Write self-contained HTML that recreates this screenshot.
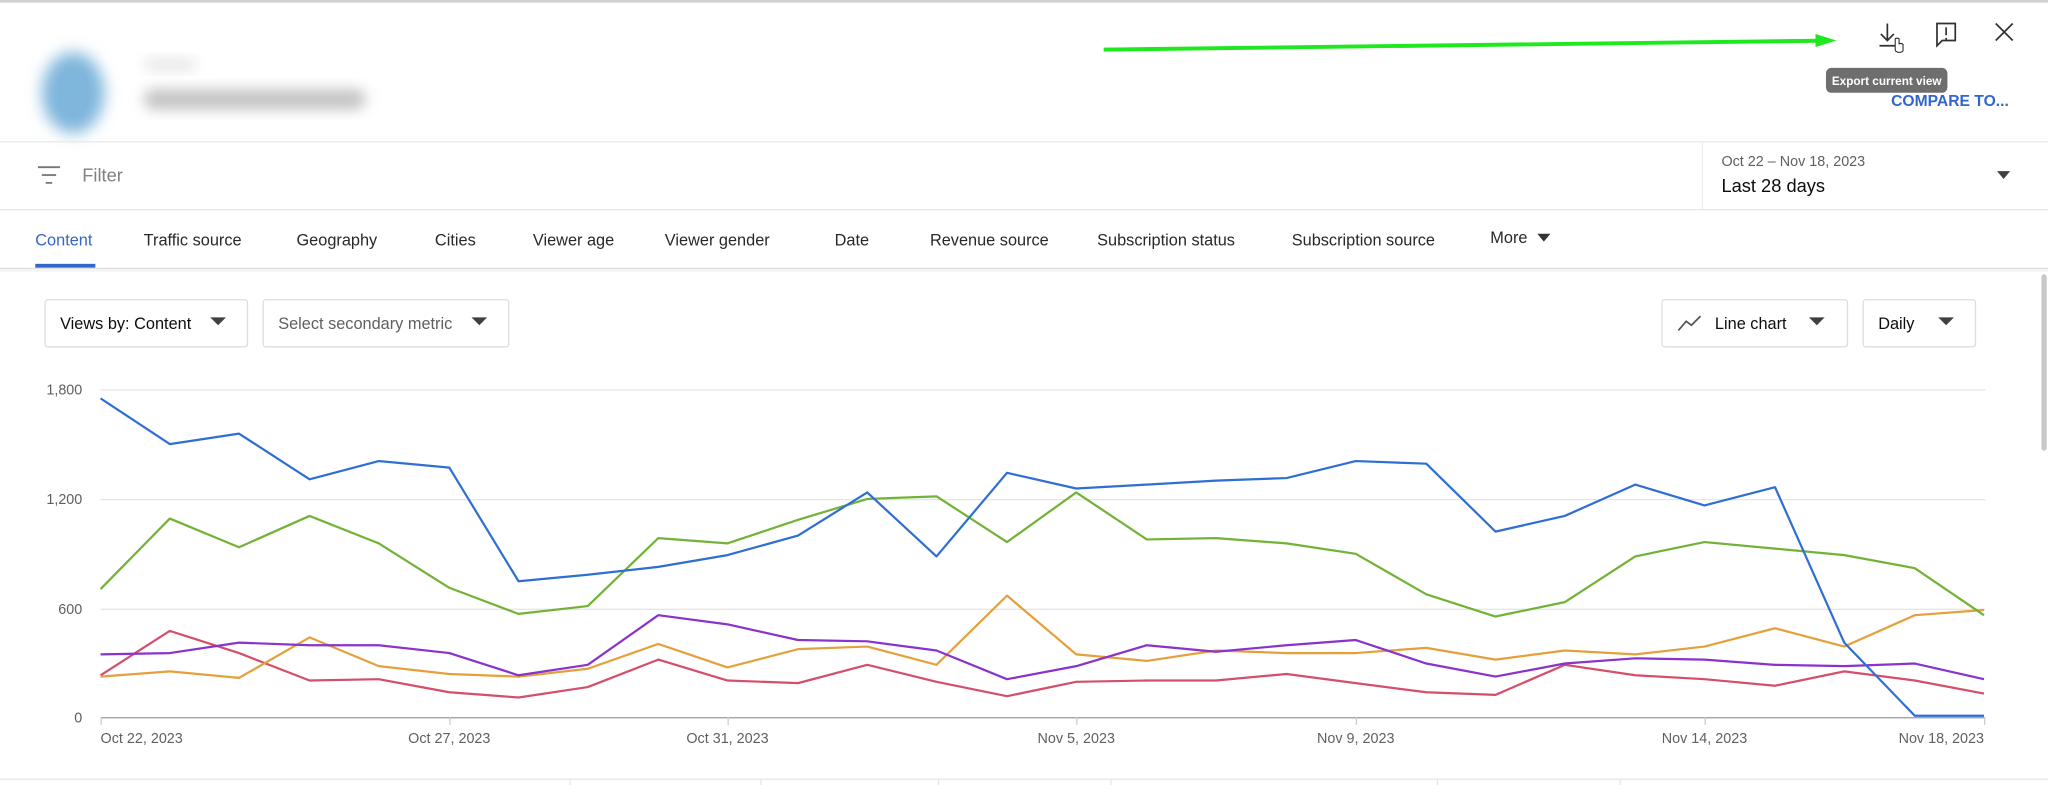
<!DOCTYPE html>
<html><head><meta charset="utf-8"><style>
html,body{margin:0;padding:0;background:#fff;overflow:hidden}
svg{display:block}
text{font-family:"Liberation Sans",sans-serif}
</style></head><body>
<svg width="2048" height="785" viewBox="0 0 1568 601" preserveAspectRatio="none" xmlns="http://www.w3.org/2000/svg">
<rect width="1568" height="601" fill="#fff"/>
<rect x="0" y="0" width="1568" height="2" fill="#d0d0d0"/>
<defs>
<filter id="b" x="-50%" y="-50%" width="200%" height="200%"><feGaussianBlur stdDeviation="6"/></filter>
<filter id="b2" x="-50%" y="-50%" width="200%" height="200%"><feGaussianBlur stdDeviation="5"/></filter>
</defs>
<ellipse cx="56" cy="71" rx="24" ry="31" fill="#7fb6dc" filter="url(#b)"/>
<rect x="110" y="68" width="170" height="16" rx="8" fill="#c4c4c4" filter="url(#b2)"/>
<rect x="110" y="45" width="40" height="9" rx="4" fill="#e6e6e6" filter="url(#b2)"/>
<line x1="0" y1="108.5" x2="1568" y2="108.5" stroke="#e8e8e8"/>
<line x1="845" y1="38" x2="1392" y2="31.2" stroke="#1ee81e" stroke-width="3"/>
<polygon points="1406,31 1390,26 1390,36" fill="#1ee81e"/>
<g stroke="#303030" stroke-width="1.3" fill="none">
<path d="M1445 18 V31 M1440 26 L1445 31 L1450 26 M1439 35 H1451"/>
<path d="M1483 18 H1497 V31 H1487 L1483 35 Z"/>
<path d="M1490 21 V27 M1490 29 V30.5"/>
<path d="M1528 18 L1541 31 M1541 18 L1528 31"/>
</g>
<path d="M1451 30 v8 c0 2 4 3 6 1 v-5 c-1-1 -3-1-3 0 v-4 c0-1 -3-1 -3 0z" fill="#fff" stroke="#222" stroke-width="0.8"/>
<rect x="1398" y="52" width="93" height="19" rx="4" fill="#6e6e6e"/>
<text x="1444.5" y="65" font-size="9" fill="#fff" text-anchor="middle" font-weight="bold">Export current view</text>
<text x="1538" y="81" font-size="12" fill="#3366cc" text-anchor="end" font-weight="bold">COMPARE TO...</text>
<g stroke="#777" stroke-width="1.4"><line x1="29" y1="128" x2="46" y2="128"/><line x1="32" y1="134" x2="43" y2="134"/><line x1="35" y1="140" x2="40" y2="140"/></g>
<text x="63" y="139" font-size="14" fill="#808080">Filter</text>
<line x1="1303.5" y1="109" x2="1303.5" y2="160" stroke="#eee"/>
<text x="1318" y="127" font-size="11" fill="#606060">Oct 22 – Nov 18, 2023</text>
<text x="1318" y="147" font-size="14" fill="#0d0d0d">Last 28 days</text>
<polygon points="1529,131 1539,131 1534,137" fill="#404040"/>
<line x1="0" y1="160.5" x2="1568" y2="160.5" stroke="#e6e6e6"/>
<g font-size="12.5" fill="#282828">
<text x="27" y="188" fill="#3366cc">Content</text>
<text x="110" y="188">Traffic source</text>
<text x="227" y="188">Geography</text>
<text x="333" y="188">Cities</text>
<text x="408" y="188">Viewer age</text>
<text x="509" y="188">Viewer gender</text>
<text x="639" y="188">Date</text>
<text x="712" y="188">Revenue source</text>
<text x="840" y="188">Subscription status</text>
<text x="989" y="188">Subscription source</text>
<text x="1141" y="186">More</text>
</g>
<polygon points="1177,179 1187,179 1182,185" fill="#333"/>
<rect x="27" y="202" width="46" height="3" fill="#3366cc"/>
<rect x="0" y="205" width="1568" height="1" fill="#e0e0e0"/>
<rect x="0" y="206" width="1568" height="2" fill="#f3f3f3"/>
<rect x="1563" y="210" width="4" height="135" rx="2" fill="#c8c8c8"/>
<g fill="#fff" stroke="#ddd"><rect x="34.5" y="229.5" width="155" height="36" rx="2"/><rect x="201.5" y="229.5" width="188" height="36" rx="2"/><rect x="1272.5" y="229.5" width="142" height="36" rx="2"/><rect x="1426.5" y="229.5" width="86" height="36" rx="2"/></g>
<text x="46" y="252" font-size="12.5" fill="#0d0d0d">Views by: Content</text>
<text x="213" y="252" font-size="12.5" fill="#606060">Select secondary metric</text>
<text x="1313" y="252" font-size="12.5" fill="#0d0d0d">Line chart</text>
<text x="1438" y="252" font-size="12.5" fill="#0d0d0d">Daily</text>
<g fill="#404040"><polygon points="161,243 173,243 167,249"/><polygon points="361,243 373,243 367,249"/><polygon points="1385,243 1397,243 1391,249"/><polygon points="1484,243 1496,243 1490,249"/></g>
<path d="M1285 253 L1291 246 L1295 249 L1302 242" stroke="#555" stroke-width="1.3" fill="none"/>
<g stroke="#e6e6e6"><line x1="77" y1="298.5" x2="1520" y2="298.5"/><line x1="77" y1="382.5" x2="1520" y2="382.5"/><line x1="77" y1="466.5" x2="1520" y2="466.5"/></g>
<line x1="77" y1="549.5" x2="1520" y2="549.5" stroke="#999"/>
<g stroke="#ccc"><line x1="77.5" y1="549" x2="77.5" y2="555"/><line x1="344.5" y1="549" x2="344.5" y2="555"/><line x1="557.5" y1="549" x2="557.5" y2="555"/><line x1="824.5" y1="549" x2="824.5" y2="555"/><line x1="1038.5" y1="549" x2="1038.5" y2="555"/><line x1="1305.5" y1="549" x2="1305.5" y2="555"/><line x1="1519.5" y1="549" x2="1519.5" y2="555"/></g>
<g font-size="11" fill="#606060" text-anchor="end">
<text x="63" y="302">1,800</text><text x="63" y="386">1,200</text><text x="63" y="470">600</text><text x="63" y="553">0</text></g>
<g font-size="11" fill="#606060" text-anchor="middle">
<text x="77" y="569" text-anchor="start">Oct 22, 2023</text>
<text x="344" y="569">Oct 27, 2023</text>
<text x="557" y="569">Oct 31, 2023</text>
<text x="824" y="569">Nov 5, 2023</text>
<text x="1038" y="569">Nov 9, 2023</text>
<text x="1305" y="569">Nov 14, 2023</text>
<text x="1519" y="569" text-anchor="end">Nov 18, 2023</text></g>
<g fill="none" stroke-width="1.7" stroke-linejoin="round">
<polyline stroke="#d34f6a" points="77,517 130,483 183,500 237,521 290,520 344,530 397,534 450,526 504,505 557,521 611,523 664,509 717,522 771,533 824,522 878,521 931,521 985,516 1038,523 1092,530 1145,532 1198,509 1252,517 1305,520 1359,525 1412,514 1466,521 1519,531"/>
<polyline stroke="#e4a03c" points="77,518 130,514 183,519 237,488 290,510 344,516 397,518 450,512 504,493 557,511 611,497 664,495 717,509 771,456 824,501 878,506 931,498 985,500 1038,500 1092,496 1145,505 1198,498 1252,501 1305,495 1359,481 1412,495 1466,471 1519,467"/>
<polyline stroke="#8a33cc" points="77,501 130,500 183,492 237,494 290,494 344,500 397,517 450,509 504,471 557,478 611,490 664,491 717,498 771,520 824,510 878,494 931,499 985,494 1038,490 1092,508 1145,518 1198,508 1252,504 1305,505 1359,509 1412,510 1466,508 1519,520"/>
<polyline stroke="#72b236" points="77,451 130,397 183,419 237,395 290,416 344,450 397,470 450,464 504,412 557,416 611,398 664,382 717,380 771,415 824,377 878,413 931,412 985,416 1038,424 1092,455 1145,472 1198,461 1252,426 1305,415 1359,420 1412,425 1466,435 1519,471"/>
<polyline stroke="#2f6fd3" points="77,305 130,340 183,332 237,367 290,353 344,358 397,445 450,440 504,434 557,425 611,410 664,377 717,426 771,362 824,374 878,371 931,368 985,366 1038,353 1092,355 1145,407 1198,395 1252,371 1305,387 1359,373 1412,492 1466,548 1519,548"/>
</g>
<line x1="0" y1="596.5" x2="1568" y2="596.5" stroke="#e6e6e6"/>
<g stroke="#e6e6e6"><line x1="436.5" y1="596" x2="436.5" y2="601"/><line x1="582.5" y1="596" x2="582.5" y2="601"/><line x1="718.5" y1="596" x2="718.5" y2="601"/><line x1="850.5" y1="596" x2="850.5" y2="601"/><line x1="1100.5" y1="596" x2="1100.5" y2="601"/><line x1="1240.5" y1="596" x2="1240.5" y2="601"/></g>
</svg>
</body></html>
